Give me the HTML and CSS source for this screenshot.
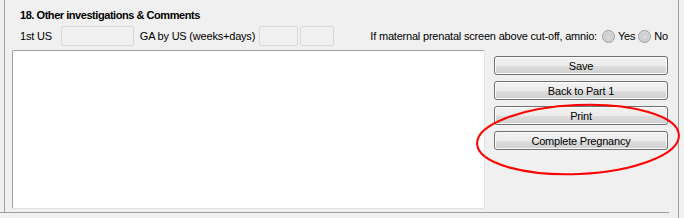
FILE: index.html
```html
<!DOCTYPE html>
<html lang="en">
<head>
    <meta charset="UTF-8">
    <title>Other investigations &amp; Comments</title>
    <link rel="stylesheet" href="styles.css">
</head>
<body>
    <div class="frame">
        <div class="pane">
            <div class="group">
                <h2 class="title">18. Other investigations &amp; Comments</h2>
                <div class="us-row">
                    <span class="lbl">1st US</span>
                    <input class="field field-us" disabled>
                    <span class="lbl lbl-ga">GA by US (weeks+days)</span>
                    <input class="field field-wk" disabled>
                    <input class="field field-dy" disabled>
                    <div class="amnio">
                        <span>If maternal prenatal screen above cut-off, amnio:</span>
                        <label class="opt"><span class="radio"></span>Yes</label>
                        <label class="opt"><span class="radio"></span>No</label>
                    </div>
                </div>
                <div class="body-row">
                    <textarea class="comments"></textarea>
                    <div class="actions">
                        <button class="btn">Save</button>
                        <button class="btn">Back to Part 1</button>
                        <button class="btn">Print</button>
                        <button class="btn">Complete Pregnancy</button>
                    </div>
                </div>
            </div>
        </div>
    </div>

    <!-- red highlight drawn over the buttons -->
    <svg class="mark" width="684" height="218" viewBox="0 0 684 218">
        <ellipse cx="578" cy="139.5" rx="101" ry="34.5" transform="rotate(-2.5 578 139.5)"
                 fill="none" stroke="#f00" stroke-width="2"/>
    </svg>
</body>
</html>
```

FILE: styles.css
```css
* {
    box-sizing: border-box;
}

body {
    margin: 0;
    width: 684px;
    height: 218px;
    overflow: hidden;
    background-color: #f0f0f0;
    font-family: "Liberation Sans", Arial, sans-serif;
    font-size: 11px;
    letter-spacing: -0.2px;
    color: #000;
    position: relative;
}

.frame {
    width: 679px;
    height: 218px;
    border-right: 1px solid #a0a0a0;
}

.pane {
    width: 669px;
    height: 213px;
    border-bottom: 1px solid #a0a0a0;
}

.group {
    margin-left: 4px;
    height: 212px;
    border-left: 1px solid #a0a0a0;
    padding: 8px 1px 0 7px;
}

.title {
    margin: 0 0 0 8px;
    font-size: 11px;
    line-height: 14px;
    font-weight: bold;
    letter-spacing: -0.45px;
}

.us-row {
    display: flex;
    align-items: center;
    height: 20px;
    margin-top: 4px;
    padding-left: 8px;
}

.lbl {
    white-space: nowrap;
}

.field {
    height: 20px;
    margin: 0;
    padding: 0;
    border: 1px solid #d9d9d9;
    border-radius: 2px;
    background-color: #f0f0f0;
}

.field-us {
    width: 73px;
    margin-left: 9px;
}

.lbl-ga {
    margin-left: 6px;
}

.field-wk {
    width: 39px;
    margin-left: 4px;
}

.field-dy {
    width: 34px;
    margin-left: 2px;
}

.amnio {
    margin-left: auto;
    display: flex;
    align-items: center;
    white-space: nowrap;
}

.opt {
    display: flex;
    align-items: center;
    margin-left: 5px;
}

.opt + .opt {
    margin-left: 3px;
}

.radio {
    width: 13px;
    height: 13px;
    margin-right: 3px;
    border-radius: 50%;
    border: 1px solid #9a9a9a;
    background: radial-gradient(circle at 50% 55%, #dcdcdc 0%, #cdcdcd 45%, #ececec 100%);
}

.body-row {
    display: flex;
    margin-top: 4px;
}

.comments {
    width: 473px;
    height: 159px;
    margin: 0;
    resize: none;
    border: 1px solid;
    border-color: #a0a0a0 #e3e3e3 #e3e3e3 #a0a0a0;
    border-radius: 2px;
    background-color: #fff;
}

.actions {
    display: flex;
    flex-direction: column;
    gap: 6px;
    margin-left: 9px;
    padding-top: 6px;
    width: 174px;
}

.btn {
    height: 19px;
    margin: 0;
    padding: 0;
    border: 1px solid #707070;
    border-radius: 3px;
    background: linear-gradient(#f2f2f2 0%, #ebebeb 50%, #dddddd 51%, #cfcfcf 100%);
    box-shadow: inset 0 0 0 1px #fcfcfc;
    font-family: "Liberation Sans", Arial, sans-serif;
    font-size: 11px;
    letter-spacing: -0.2px;
    color: #000;
}

.mark {
    position: absolute;
    left: 0;
    top: 0;
    pointer-events: none;
}
```
